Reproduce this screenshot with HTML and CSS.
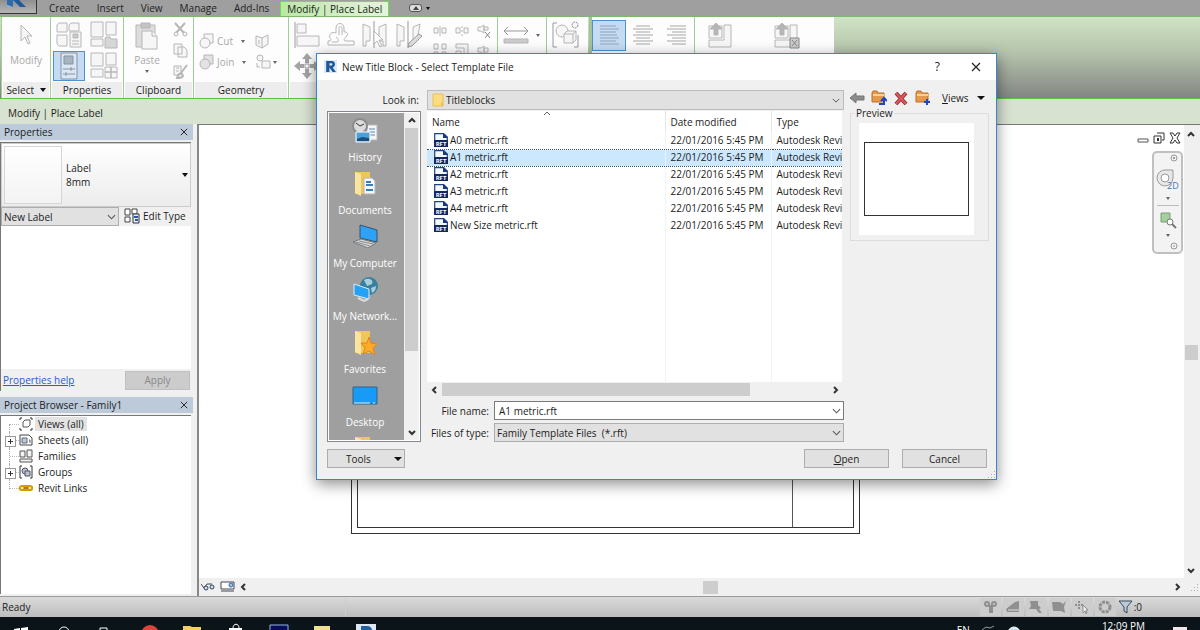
FILE: index.html
```html
<!DOCTYPE html>
<html lang="en">
<head>
    <meta charset="UTF-8">
    <meta name="viewport" content="width=device-width, initial-scale=1">
    <title>New Title Block - Select Template File</title>
    <link rel="stylesheet" href="styles.css">
</head>
<body>

<!-- shared icons -->
<svg class="sprite" aria-hidden="true">
    <symbol id="i-chev" viewBox="0 0 10 6"><path d="M1 1l4 4 4-4" fill="none" stroke="#555" stroke-width="1.2"/></symbol>
    <symbol id="i-x" viewBox="0 0 10 10"><path d="M1 1l8 8M9 1l-8 8" fill="none" stroke="#222" stroke-width="1.2"/></symbol>
    <symbol id="i-rft" viewBox="0 0 14 14">
        <path d="M.7 13V.7h9L13.3 4v9z" fill="#f4f8ff" stroke="#23437f" stroke-width="1.2"/>
        <path d="M9 0l5 5H9z" fill="#17397c"/>
        <rect y="7" width="14" height="7" fill="#12295f"/>
        <text x="7" y="13" font-size="6" font-weight="bold" text-anchor="middle" fill="#fff">RFT</text>
    </symbol>
    <symbol id="i-r" viewBox="0 0 12 12">
        <rect width="12" height="12" fill="#dce8f5"/>
        <path d="M2 1h5c4 0 4 5 1 6l3 4H8L5 7v4H2z" fill="#1d5a9c"/>
        <path d="M5 3h2c1 0 1 2 0 2H5z" fill="#dce8f5"/>
    </symbol>
    <symbol id="i-folder" viewBox="0 0 26 26">
        <path d="M4 2h15v22H4z" fill="#efc65a"/><path d="M4 2l6 2v22l-6-3z" fill="#fbe3a0"/>
    </symbol>
    <symbol id="i-orange" viewBox="0 0 16 16">
        <path d="M1 3l1-2h4l1 2h6v9H1z" fill="#e39a4c" stroke="#b9712a"/><path d="M2 5h11" stroke="#f9d09c" stroke-width="2"/>
    </symbol>
    <symbol id="i-blocks" viewBox="0 0 28 28">
        <path d="M1 1h9v15H1zM13 1h10v10H13zM1 19h12v6H1z"/>
    </symbol>
</svg>

<div class="app">

    <div class="tabs">
        <button class="logo" aria-label="Application menu">
            <svg width="36" height="13" viewBox="0 0 36 13"><path d="M7 0h6v7l-6-2z" fill="#2b6cb0"/><path d="M13 0h6l7 7h-6z" fill="#1e5b98"/><path d="M7 5l6 2-6-1z" fill="#9cc6ea"/></svg>
        </button>
        <a href="#">Create</a>
        <a href="#">Insert</a>
        <a href="#">View</a>
        <a href="#">Manage</a>
        <a href="#">Add-Ins</a>
        <a href="#" class="active">Modify | Place Label</a>
        <button class="pill" aria-label="Minimize ribbon"><svg width="6" height="4" viewBox="0 0 6 4"><path d="M0 4l3-4 3 4z" fill="#444"/></svg></button>
        <i class="tri"></i>
    </div>

    <div class="ribbon">
        <section class="group g-select">
            <div class="body">
                <button class="big">
                    <svg width="14" height="22" viewBox="0 0 14 22"><path d="M2 1v16l4-4 3 7 2-1-3-7h5z" class="dim"/></svg>
                    <span>Modify</span>
                </button>
            </div>
            <h3>Select <i class="tri"></i></h3>
        </section>

        <section class="group g-props">
            <div class="body">
                <button aria-label="Family category"><svg width="28" height="28" viewBox="0 0 28 28" class="dim"><path d="M4 2h8v9H2V4zM16 2h8v8H14V4zM2 14h10v11H4l-2-2z"/><path d="M15 11h11v15H15z"/><path d="M18 13h5v4h-5z" fill="#c9c9c9"/><path d="M17 20h7M17 23h7"/></svg></button>
                <button aria-label="Type properties"><svg width="28" height="28" viewBox="0 0 28 28" class="dim"><path d="M1 1h12v15H1zM16 1h10v13H16zM1 18h12v7H1z"/><path d="M15 18l1-2h4l1 2h6v9H15z" fill="#d6d6d6"/></svg></button>
                <button class="on" aria-label="Properties"><svg width="28" height="28" viewBox="0 0 28 28" class="dim strong"><path d="M6 1h16v26H6z"/><path d="M9 4h9v8H9z" fill="#a9b4bf"/><path d="M8 17h12M8 22h12M16 15v4M11 20v4"/></svg></button>
                <button aria-label="Family types"><svg width="28" height="28" viewBox="0 0 28 28" class="dim"><path d="M1 1h12v13H1zM16 1h10v12H16zM1 17h12v8H1z"/><path d="M15 15h6v5h-6zM21 15h6v5h-6zM15 20h6v6h-6zM21 20h6v6h-6z"/></svg></button>
            </div>
            <h3>Properties</h3>
        </section>

        <section class="group g-clip">
            <div class="body">
                <button class="big">
                    <svg width="24" height="28" viewBox="0 0 24 28" class="dim"><path d="M1 3h19v22H1z" fill="#ddd"/><path d="M6 1h9v5H6z" fill="#c4c4c4"/><path d="M7 9h10l5 5v13H7z"/><path d="M17 9v5h5"/></svg>
                    <span>Paste</span>
                    <i class="tri mini"></i>
                </button>
                <div class="stack">
                    <button aria-label="Cut"><svg width="15" height="15" viewBox="0 0 15 15" class="dim"><path d="M2 1l9 10M12 1L3 11" stroke-width="2"/><circle cx="3" cy="12" r="2"/><circle cx="12" cy="12" r="2"/></svg></button>
                    <button aria-label="Copy"><svg width="15" height="15" viewBox="0 0 15 15" class="dim"><path d="M1 1h8v10H1zM5 4h6l3 3v7H5z"/></svg></button>
                    <button aria-label="Match type"><svg width="15" height="15" viewBox="0 0 15 15" class="dim"><path d="M1 2h7v9H1zM3 4h3M3 7h3"/><path d="M14 1L8 9M4 14c1-4 3-5 5-4l1 2c-1 2-3 2-6 2z" stroke-width="2"/></svg></button>
                </div>
            </div>
            <h3>Clipboard</h3>
        </section>

        <section class="group g-geo">
            <div class="body">
                <div class="row">
                    <svg width="16" height="16" viewBox="0 0 16 16" class="dim"><path d="M5 1h9v9H5z"/><circle cx="6" cy="10" r="5"/></svg>
                    <button>Cut</button><i class="tri mini"></i>
                    <svg width="16" height="16" viewBox="0 0 16 16" class="dim"><path d="M2 3l6 2 6-3v9l-6 4-6-3zM8 5v10M5 7v4"/></svg>
                </div>
                <div class="row">
                    <svg width="16" height="16" viewBox="0 0 16 16" class="dim"><path d="M5 1h9v9H5z" fill="#e2e2e2"/><circle cx="6" cy="10" r="5" fill="#e2e2e2"/></svg>
                    <button>Join</button><i class="tri mini"></i>
                    <svg width="16" height="16" viewBox="0 0 16 16" class="dim"><circle cx="5" cy="4" r="3"/><path d="M7 7h8v7H7zM2 9v4h3"/></svg><i class="tri mini"></i>
                </div>
            </div>
            <h3>Geometry</h3>
        </section>

        <section class="group g-modify">
            <div class="body">
                <div class="large">
                    <svg width="28" height="28" viewBox="0 0 28 28" class="dim"><path d="M2 1v26" stroke="#999"/><path d="M4 3h9v9H4zM4 15h22v10H4z"/></svg>
                    <svg width="28" height="28" viewBox="0 0 28 28" class="dim"><path d="M1 24h26v-4h-8c-3 0-2-3 0-4 3-2 1-6-2-5V7c0-6-8-6-8 0v5c-4-2-8 2-6 5 2 2 1 3-2 3zM5 21h5c2 0 2-3-1-5M12 14V7c0-2 3-2 3 0v7" fill="none"/></svg>
                    <svg width="28" height="28" viewBox="0 0 28 28" class="dim"><path d="M13 0v27" stroke="#999"/><path d="M2 3l7 3v14h-4v5H2zM25 3l-7 3v14h4v5h3z"/><path d="M13 10v13l3-3 3 6 2-1-3-6h4z" fill="#fff"/></svg>
                    <svg width="28" height="28" viewBox="0 0 28 28" class="dim"><path d="M13 0v27" stroke="#999"/><path d="M2 3l7 3v14h-4v5H2zM25 3l-7 3v14h4z"/><path d="M13 26l1-4 10-9 3 2-10 10z" fill="#ddd" stroke="#999"/></svg>
                    <svg width="28" height="28" viewBox="0 0 28 28"><path d="M14 1l5 6h-3v4h-4V7H9zM14 27l5-6h-3v-4h-4v4H9zM1 14l6-5v3h4v4H7v3zM27 14l-6-5v3h-4v4h4v3z" fill="#a4a4a4"/><path d="M12 12h4v4h-4z" fill="#fff" stroke="#999"/></svg>
                </div>
                <div class="minis">
                    <svg width="14" height="16" viewBox="0 0 14 16" class="dim"><path d="M1 5h4v5H1zM9 5h4v5H9zM7 3v10"/></svg>
                    <svg width="14" height="16" viewBox="0 0 14 16" class="dim"><path d="M1 5h4v5H1zM9 5h4v5H9z"/><path d="M7 3v10" stroke-dasharray="2 2"/></svg>
                    <svg width="14" height="16" viewBox="0 0 14 16" class="dim"><path d="M1 4h3l3-2v8L4 8H1zM7 4h4v3H7z"/><path d="M8 9l5 6M13 9l-5 6" stroke="#888"/></svg>
                    <svg width="14" height="16" viewBox="0 0 14 16" class="dim"><path d="M1 3h4v5H1zM9 3h4v5H9zM1 11h4v4H1zM9 11h4v4H9z"/></svg>
                    <svg width="14" height="16" viewBox="0 0 14 16" class="dim"><path d="M1 3h12v12h-4V7H1zM1 10h5v5H1z"/></svg>
                    <svg width="14" height="16" viewBox="0 0 14 16" class="dim"><path d="M1 7h3l3-2v8l-3-2H1zM7 7h4v4H7z"/></svg>
                </div>
            </div>
            <h3></h3>
        </section>

        <section class="group g-measure">
            <div class="body">
                <svg width="28" height="28" viewBox="0 0 28 28" class="dim"><path d="M2 10h24M6 6l-4 4 4 4M22 6l4 4-4 4" fill="none" stroke="#999"/><path d="M2 18h24v4H2z" fill="#ccc"/></svg>
                <i class="tri mini"></i>
            </div>
            <h3></h3>
        </section>

        <section class="group g-create">
            <div class="body">
                <svg width="28" height="28" viewBox="0 0 28 28" class="dim"><path d="M5 2H1v24h4M22 26h4V14" fill="none" stroke="#999"/><circle cx="10" cy="10" r="6"/><path d="M12 13l3-3h9v9l-3 3h-9zM12 13h9v9M21 13l3-3"/><circle cx="23" cy="4" r="3" stroke-dasharray="2 1" stroke="#888"/></svg>
            </div>
            <h3></h3>
        </section>

        <section class="group g-format">
            <div class="body">
                <button class="on" aria-label="Align left"><svg width="24" height="24" viewBox="0 0 24 24"><path d="M3 2h16M3 5h19M3 8h16M3 11h17M3 14h19M3 17h16M3 20h19" stroke="#8ea3b6"/></svg></button>
                <button aria-label="Align center"><svg width="24" height="24" viewBox="0 0 24 24"><path d="M5 2h14M2 5h20M5 8h14M2 11h20M5 14h14M2 17h20M5 20h14" stroke="#a5a5a5"/></svg></button>
                <button aria-label="Align right"><svg width="24" height="24" viewBox="0 0 24 24"><path d="M5 2h16M2 5h19M7 8h14M2 11h19M7 14h14M2 17h19M7 20h14" stroke="#a5a5a5"/></svg></button>
            </div>
            <h3></h3>
        </section>

        <section class="group g-load">
            <div class="body">
                <svg width="28" height="28" viewBox="0 0 28 28" class="dim"><path d="M3 5h13v12H3zM18 4h7v22H3v-7h15z"/><path d="M10 2l6 6h-4v6H8V8H4z" fill="#b5b5b5"/></svg>
                <svg width="28" height="28" viewBox="0 0 28 28" class="dim"><path d="M3 5h13v12H3zM18 4h7v22H3v-7h15z"/><path d="M10 2l6 6h-4v6H8V8H4z" fill="#b5b5b5"/><path d="M18 17h9v10h-9z" fill="#ccc" stroke="#888"/><path d="M20 19l5 6M25 19l-5 6" stroke="#888"/></svg>
            </div>
            <h3></h3>
        </section>
    </div>

    <div class="options">Modify | Place Label</div>

    <div class="work">
        <aside class="side">
            <div class="cap"><span>Properties</span><button aria-label="Close properties"><svg width="8" height="8"><use href="#i-x"/></svg></button></div>
            <div class="props">
                <button class="type">
                    <span class="thumb"></span>
                    <span class="name">Label<br>8mm</span>
                    <i class="tri"></i>
                </button>
                <div class="filter">
                    <span class="combo"><select aria-label="Filter"><option>New Label</option></select><svg width="9" height="6"><use href="#i-chev"/></svg></span>
                    <button class="edit"><svg width="16" height="16" viewBox="0 0 16 16"><path d="M1 1h5v6H1zM8 1h5v5H8zM1 9h5v5H1z" fill="#fff" stroke="#444"/><path d="M9 6h6v9H9z" fill="#e8eefc" stroke="#333"/><path d="M10 9h4M11 12h3" stroke="#2b55b5" stroke-width="2"/></svg>Edit Type</button>
                </div>
                <div class="blank"></div>
                <div class="apply"><a href="#">Properties help</a><button disabled>Apply</button></div>
            </div>

            <div class="cap"><span>Project Browser - Family1</span><button aria-label="Close browser"><svg width="8" height="8"><use href="#i-x"/></svg></button></div>
            <ul class="tree">
                <li><i class="br first"></i><svg width="14" height="14" viewBox="0 0 14 14"><path d="M3 1H1v2M11 1h2v2M1 11v2h2M13 11v2h-2" fill="none" stroke="#333"/><path d="M4 5l2-2h5v5l-2 2H4z" fill="#fff" stroke="#555"/></svg><span class="sel">Views (all)</span></li>
                <li><i class="br plus"></i><svg width="14" height="14" viewBox="0 0 14 14"><path d="M1 2h9l3 3v7H1z" fill="#fff" stroke="#444"/><path d="M3 5h5v5H3zM10 7h1v3" fill="#b9cbe0" stroke="#667"/></svg><span>Sheets (all)</span></li>
                <li><i class="br"></i><svg width="14" height="14" viewBox="0 0 14 14"><path d="M1 2h5v6H1zM8 1h5v7H8zM1 10h12v3H1z" fill="#f3f3f3" stroke="#555"/></svg><span>Families</span></li>
                <li><i class="br plus"></i><svg width="14" height="14" viewBox="0 0 14 14"><path d="M3 1H1v12h2M11 1h2v12h-2" fill="none" stroke="#333"/><circle cx="6" cy="6" r="3" fill="#b9c4d0" stroke="#556"/><path d="M6 6h5v5H6z" fill="#b9c4d0" stroke="#556"/></svg><span>Groups</span></li>
                <li><i class="br last"></i><svg width="14" height="14" viewBox="0 0 14 14"><path d="M3 5h3v4H3c-3 0-3-4 0-4zM11 5H8v4h3c3 0 3-4 0-4z" fill="#fff3b0" stroke="#d99a00" stroke-width="2"/><path d="M4 7h6" stroke="#8a6200"/></svg><span>Revit Links</span></li>
            </ul>
        </aside>

        <main class="view">
            <div class="canvas">
                <div class="sheet"><div class="inner"><div class="strip"></div></div></div>
                <div class="mdi">
                    <svg width="12" height="12" viewBox="0 0 12 12"><path d="M1 7h10v3H1z" fill="#fff" stroke="#555"/></svg>
                    <svg width="12" height="12" viewBox="0 0 12 12"><path d="M4 1h7v7H9M1 4h7v7H1z" fill="none" stroke="#333"/><path d="M4 6h2v3H4z" fill="#333"/></svg>
                    <svg width="12" height="12" viewBox="0 0 12 12"><path d="M1 1h3l2 3 2-3h3L8 6l3 5H8L6 8l-2 3H1l3-5z" fill="#fff" stroke="#333"/></svg>
                </div>
                <div class="navbar">
                    <svg width="9" height="9" viewBox="0 0 9 9"><circle cx="4" cy="4" r="3" fill="none" stroke="#999"/><path d="M3 3l2 2M5 3L3 5" stroke="#999"/></svg>
                    <svg width="24" height="24" viewBox="0 0 24 24"><path d="M10 2h7v8a8 8 0 1 1-7-8z" fill="#e6e8ea" stroke="#999"/><circle cx="9" cy="10" r="4" fill="#fff" stroke="#999"/><text x="11" y="21" font-size="9" fill="#3f76b5">2D</text></svg>
                    <i class="tri mini"></i>
                    <hr>
                    <svg width="18" height="18" viewBox="0 0 18 18"><path d="M2 2h9v9H2z" fill="#a5cf9a" stroke="#7d9b78"/><circle cx="11" cy="11" r="3" fill="#fff" stroke="#777"/><path d="M13 13l4 4" stroke="#777" stroke-width="2"/></svg>
                    <i class="tri mini"></i>
                    <svg width="9" height="9" viewBox="0 0 9 9"><circle cx="4" cy="4" r="3" fill="none" stroke="#999"/><path d="M3 4h2" stroke="#999"/></svg>
                </div>
            </div>
            <div class="vbar">
                <svg width="8" height="6" viewBox="0 0 8 6"><path d="M1 5l3-3 3 3" class="arr"/></svg>
                <div class="thumb"></div>
                <svg width="8" height="6" viewBox="0 0 8 6"><path d="M1 1l3 3 3-3" class="arr"/></svg>
            </div>
            <div class="hbar">
                <svg width="14" height="12" viewBox="0 0 14 12"><path d="M0 3l3 4 3-4h5" fill="none" stroke="#444"/><circle cx="5" cy="7" r="2" fill="#cfe0f2" stroke="#345"/><circle cx="11" cy="6" r="2" fill="#cfe0f2" stroke="#345"/></svg>
                <svg width="15" height="12" viewBox="0 0 15 12"><path d="M1 1h13v7H1zM1 10h13" fill="#fff" stroke="#445"/><circle cx="11" cy="4" r="2" fill="#9cc3ea" stroke="#369"/></svg>
                <svg width="6" height="8" viewBox="0 0 6 8"><path d="M5 1L2 4l3 3" class="arr"/></svg>
                <div class="thumb"></div>
                <svg width="6" height="8" viewBox="0 0 6 8"><path d="M1 1l3 3-3 3" class="arr"/></svg>
                <i class="grip"></i>
            </div>
        </main>
    </div>

    <footer class="status">
        <span class="ready">Ready</span>
        <div class="cell"></div>
        <div class="toggles">
            <button aria-label="Select links"><svg width="16" height="14" viewBox="0 0 16 14"><path d="M7 5h4v8H7z" fill="#8f8f8f"/><circle cx="5" cy="4" r="2" fill="none" stroke="#8f8f8f" stroke-width="2"/><circle cx="12" cy="4" r="2" fill="none" stroke="#8f8f8f" stroke-width="2"/></svg></button>
            <button aria-label="Select underlay"><svg width="16" height="14" viewBox="0 0 16 14"><path d="M1 9l9-7 4-1v11H2z" fill="#8f8f8f"/><path d="M3 10h11" stroke="#ddd"/></svg></button>
            <button aria-label="Select pinned"><svg width="16" height="14" viewBox="0 0 16 14"><path d="M2 1h8v4l3 3-2 1 3 4h-3L8 9H1l2-3z" fill="#8f8f8f"/></svg></button>
            <button aria-label="Select by face"><svg width="16" height="14" viewBox="0 0 16 14"><path d="M1 2h8l3 2 3-3-2 6 1 6-4-2H2z" fill="#8f8f8f"/></svg></button>
            <button aria-label="Drag elements"><svg width="16" height="14" viewBox="0 0 16 14"><path d="M5 1v8M1 5h8" stroke="#8f8f8f" stroke-dasharray="2 1" stroke-width="2"/><path d="M9 5v8l2-2 1 3 1-1-1-3h2z" fill="#eee" stroke="#8f8f8f"/></svg></button>
            <button aria-label="Background processes"><svg width="16" height="14" viewBox="0 0 16 14"><circle cx="8" cy="7" r="5" fill="none" stroke="#8f8f8f" stroke-width="3" stroke-dasharray="3 1"/></svg></button>
            <span class="filt"><svg width="15" height="14" viewBox="0 0 15 14"><path d="M1 1h13L9 7v6l-3-2V7z" fill="#b9cbdb" stroke="#3b4a58"/></svg>:0</span>
        </div>
    </footer>

    <div class="taskbar">
        <svg width="16" height="13" viewBox="0 0 16 13"><path d="M1 12l6-1v2H1zM8 11l7-1v3H8z" fill="#fff"/></svg>
        <svg width="16" height="13" viewBox="0 0 16 13"><circle cx="12" cy="15" r="5" fill="none" stroke="#fff"/></svg>
        <svg width="16" height="13" viewBox="0 0 16 13"><path d="M9 13v-2h7v2" fill="none" stroke="#fff"/></svg>
        <svg width="20" height="13" viewBox="0 0 20 13"><circle cx="20" cy="17" r="9" fill="#d9453a"/></svg>
        <svg width="20" height="13" viewBox="0 0 20 13"><path d="M10 13V9h7l2 1h9v3z" fill="#f2cf63"/></svg>
        <svg width="20" height="13" viewBox="0 0 20 13"><path d="M13 13v-2h13v2z" fill="#fff"/><path d="M17 11c0-5 6-5 6 0" fill="none" stroke="#fff"/></svg>
        <svg width="20" height="13" viewBox="0 0 20 13"><path d="M11 13V8h18v5" fill="#0b0b5c" stroke="#8fb7e6"/></svg>
        <svg width="20" height="13" viewBox="0 0 20 13"><path d="M12 9h16v4H12z" fill="#efdf90"/></svg>
        <span class="current"><svg width="20" height="13" viewBox="0 0 20 13"><path d="M0 7h20v6H0z" fill="#dbe8f4"/><path d="M5 13V9h6c3 0 5 2 5 4z" fill="#23609f"/></svg></span>
        <div class="tray">
            <span class="lang">EN</span>
            <svg width="16" height="13" viewBox="0 0 16 13"><path d="M2 13l4-3 4 1 4-2" fill="none" stroke="#999"/></svg>
            <svg width="16" height="13" viewBox="0 0 16 13"><circle cx="8" cy="16" r="6" fill="#cfe6f5" stroke="#fff"/></svg>
            <time>12:09 PM</time>
            <svg width="16" height="13" viewBox="0 0 16 13"><path d="M1 10h14v3H1z" fill="#f3e6ea"/></svg>
        </div>
    </div>
</div>

<div class="dialog" role="dialog" aria-labelledby="dlg-title">
    <header>
        <svg width="13" height="13"><use href="#i-r"/></svg>
        <h2 id="dlg-title">New Title Block - Select Template File</h2>
        <button class="help" aria-label="Help">?</button>
        <button aria-label="Close"><svg width="10" height="10"><use href="#i-x"/></svg></button>
    </header>

    <div class="content">
        <label class="lookin" for="lookin">Look in:</label>
        <span class="combo wide">
            <svg class="fold" width="12" height="14" viewBox="0 0 12 14"><path d="M1 1h10v12H1z" fill="#fbdc80" stroke="#eac04f"/><path d="M9 9h2v4H9z" fill="#f3c24b"/></svg>
            <select id="lookin"><option>Titleblocks</option></select>
            <svg class="chev" width="8" height="5"><use href="#i-chev"/></svg>
        </span>
        <div class="tools">
            <button aria-label="Back"><svg width="16" height="16" viewBox="0 0 16 16"><path d="M1 8l6-5v3h8v4H7v3z" fill="#8c8c8c" stroke="#777"/></svg></button>
            <button aria-label="Up one level"><svg width="16" height="16" viewBox="0 0 16 16"><use href="#i-orange"/><path d="M8 14h5V9M10 11l3-3 3 3" fill="none" stroke="#2344c4" stroke-width="2"/></svg></button>
            <button aria-label="Delete"><svg width="16" height="16" viewBox="0 0 16 16"><path d="M3 3l10 11M13 3L3 14" stroke="#9c2a30" stroke-width="4"/><path d="M3 3l10 11M13 3L3 14" stroke="#d65a5e" stroke-width="2"/></svg></button>
            <button aria-label="New folder"><svg width="16" height="16" viewBox="0 0 16 16"><use href="#i-orange"/><path d="M12 9v6M9 12h6" stroke="#2344c4" stroke-width="2"/></svg></button>
            <button class="views"><u>V</u>iews <i class="tri"></i></button>
        </div>

        <div class="places">
            <ul>
                <li><svg width="28" height="28" viewBox="0 0 28 28"><path d="M16 8h10v15H16z" fill="#f5f5f5" stroke="#bbb"/><path d="M18 12h6M18 15h6M18 18h6" stroke="#5a86b5"/><circle cx="9" cy="9" r="7" fill="#dcdcdc" stroke="#8b8b8b" stroke-width="2"/><path d="M9 9L5 6M9 9l4-2" stroke="#333"/><path d="M5 15h14v10H5z" fill="#4aa0dc" stroke="#fff"/><path d="M6 22l5-2 7 1v3H6z" fill="#1d4f7c"/></svg>History</li>
                <li><svg width="28" height="28" viewBox="0 0 28 28"><use href="#i-folder" width="26" height="26"/><path d="M13 8h8l3 3v13H13z" fill="#f7f7f7" stroke="#b5b5b5"/><path d="M15 12h5M15 15h7M15 20h7" stroke="#347fc0" stroke-width="2"/></svg>Documents</li>
                <li><svg width="28" height="28" viewBox="0 0 28 28"><path d="M9 2l17 5v12L9 15z" fill="#2da2f7" stroke="#35536d"/><path d="M2 19l8-3 15 4-8 5z" fill="#d8dbdd" stroke="#777"/><path d="M5 19l14 4M8 18l14 3" stroke="#888"/></svg>My Computer</li>
                <li><svg width="28" height="28" viewBox="0 0 28 28"><circle cx="18" cy="10" r="9" fill="#397f9f"/><path d="M13 4c5-3 10 0 8 4l-5 2zM20 12l5-2c0 4-2 6-4 7z" fill="#a5d0dc"/><path d="M3 8l15 5v10L3 19z" fill="#26a2f5" stroke="#d8edf8"/><path d="M7 22l6 3 4-2" fill="none" stroke="#ddd" stroke-width="2"/></svg>My Network...</li>
                <li><svg width="28" height="28" viewBox="0 0 28 28"><use href="#i-folder" width="26" height="26"/><path d="M18 8l2 6 6 1-4 4 2 7-6-4-6 3 2-6-4-5h6z" fill="#fbab27" stroke="#e5831a"/></svg>Favorites</li>
                <li><svg width="28" height="28" viewBox="0 0 28 28"><path d="M2 5h24v17H2z" fill="#189bf7" stroke="#35627f"/><path d="M3 21h22" stroke="#d9f0ff" stroke-dasharray="16 3 2 1"/></svg>Desktop</li>
                <li><svg width="28" height="28"><use href="#i-folder" width="26" height="26"/></svg></li>
            </ul>
            <div class="pbar">
                <svg width="8" height="6" viewBox="0 0 8 6"><path d="M1 5l3-3 3 3" class="arr"/></svg>
                <div class="thumb"></div>
                <svg width="8" height="6" viewBox="0 0 8 6"><path d="M1 1l3 3 3-3" class="arr"/></svg>
            </div>
        </div>

        <div class="center">
            <div class="list">
                <svg class="sort" width="8" height="5" viewBox="0 0 8 5"><path d="M1 4l3-3 3 3" fill="none" stroke="#666"/></svg>
                <table>
                    <thead><tr><th class="c-name">Name</th><th class="c-date">Date modified</th><th>Type</th></tr></thead>
                    <tbody>
                        <tr><td><svg width="14" height="14"><use href="#i-rft"/></svg>A0 metric.rft</td><td>22/01/2016 5:45 PM</td><td>Autodesk Revit</td></tr>
                        <tr class="picked"><td><svg width="14" height="14"><use href="#i-rft"/></svg>A1 metric.rft</td><td>22/01/2016 5:45 PM</td><td>Autodesk Revit</td></tr>
                        <tr><td><svg width="14" height="14"><use href="#i-rft"/></svg>A2 metric.rft</td><td>22/01/2016 5:45 PM</td><td>Autodesk Revit</td></tr>
                        <tr><td><svg width="14" height="14"><use href="#i-rft"/></svg>A3 metric.rft</td><td>22/01/2016 5:45 PM</td><td>Autodesk Revit</td></tr>
                        <tr><td><svg width="14" height="14"><use href="#i-rft"/></svg>A4 metric.rft</td><td>22/01/2016 5:45 PM</td><td>Autodesk Revit</td></tr>
                        <tr><td><svg width="14" height="14"><use href="#i-rft"/></svg>New Size metric.rft</td><td>22/01/2016 5:45 PM</td><td>Autodesk Revit</td></tr>
                        <tr class="rest"><td></td><td></td><td></td></tr>
                    </tbody>
                </table>
            </div>
            <div class="lbar">
                <svg width="6" height="8" viewBox="0 0 6 8"><path d="M5 1L2 4l3 3" class="arr"/></svg>
                <div class="thumb"></div>
                <svg width="6" height="8" viewBox="0 0 6 8"><path d="M1 1l3 3-3 3" class="arr"/></svg>
            </div>
            <div class="field">
                <label for="fname">File name:</label>
                <span class="combo"><input id="fname" type="text" value="A1 metric.rft"><svg width="9" height="6"><use href="#i-chev"/></svg></span>
            </div>
            <div class="field">
                <label for="ftype">Files of type:</label>
                <span class="combo"><select id="ftype"><option>Family Template Files &nbsp;(*.rft)</option></select><svg width="9" height="6"><use href="#i-chev"/></svg></span>
            </div>
        </div>

        <fieldset class="preview">
            <legend>Preview</legend>
            <div class="paper"><div class="frame"></div></div>
        </fieldset>
    </div>

    <div class="actions">
        <button class="toolsbtn"><span>Tools</span><i class="tri"></i></button>
        <button class="ok"><u>O</u>pen</button>
        <button class="ok">Cancel</button>
    </div>
    <i class="grip"></i>
</div>

</body>
</html>
```
FILE: styles.css
```css
* {
    box-sizing: border-box;
}
body {
    margin: 0;
    font-family: "Open Sans", "Noto Sans", sans-serif;
    font-size: 10px;
    line-height: 14px;
    color: #1c1c1c;
    overflow: hidden;
}
h2, h3, ul, fieldset {
    margin: 0;
    padding: 0;
    font-size: 10px;
    font-weight: normal;
    list-style: none;
}
button, select, input {
    font: inherit;
    color: inherit;
    margin: 0;
    padding: 0;
    border: 0;
    background: none;
    border-radius: 0;
}
select {
    appearance: none;
}
svg {
    display: block;
    flex: none;
}
.sprite {
    position: absolute;
    width: 0;
    height: 0;
}
.tri {
    flex: none;
    display: inline-block;
    border: 4px solid transparent;
    border-top-color: #111;
    border-bottom: 0;
}
.tri.mini {
    border-width: 3px 2px 0;
    border-top-color: #666;
}
.dim {
    stroke: #b6b6b6;
    fill: #f6f6f6;
}
.strong {
    stroke: #8195a8;
    fill: #dbe6f2;
}
.arr {
    fill: none;
    stroke: #333;
    stroke-width: 2;
}
.thumb {
    background: #cdcdcd;
}
.grip {
    width: 8px;
    height: 8px;
    background: radial-gradient(#aaa 1px, transparent 1px) 0 0 / 3px 3px;
    clip-path: polygon(100% 0, 100% 100%, 0 100%);
}

/* whole window */
.app {
    display: flex;
    flex-direction: column;
    height: 100vh;
    background: #f0f0f0;
}

/* ribbon tabs */
.tabs {
    display: flex;
    align-items: center;
    gap: 1px;
    height: 17px;
    background: #9f9f9f;
    border-bottom: 1px solid #7cb870;
}
.tabs a {
    color: #222;
    text-decoration: none;
    padding: 0 8px;
}
.tabs .active {
    align-self: flex-end;
    height: 15px;
    margin-left: 2px;
    padding: 0 6px;
    background: linear-gradient(90deg, #b9e8a5, #e3f5da);
    border: 1px solid #6be04c;
    border-bottom: 0;
}
.logo {
    width: 37px;
    height: 14px;
    margin-right: 3px;
    align-self: flex-start;
    border: 1px solid #333;
    border-width: 0 1px 1px 0;
    background: linear-gradient(#8f8f8f, #b5b5b5);
}
.pill {
    display: flex;
    align-items: center;
    justify-content: center;
    width: 13px;
    height: 8px;
    margin: 0 3px 0 19px;
    border: 1px solid #555;
    border-radius: 3px;
    background: #ddd;
}
.tabs .tri {
    border-width: 3px 2px 0;
}

/* ribbon */
.ribbon {
    display: flex;
    height: 82px;
    padding-left: 1px;
    background: linear-gradient(#cfe4c4, #b4c2ab 45%, #838583);
    border-bottom: 1px solid #5cc040;
}
.group {
    display: flex;
    flex-direction: column;
    flex: none;
    background: #fdfdfd;
    border-left: 1px solid #9fcf92;
}
.group .body {
    flex: 1;
    display: flex;
    color: #a8a8a8;
}
.group h3 {
    height: 16px;
    margin: 0 1px;
    background: #ededed;
    text-align: center;
    line-height: 16px;
}
.group button {
    display: flex;
    align-items: center;
    justify-content: center;
}
.group .big {
    flex-direction: column;
    justify-content: flex-start;
    gap: 3px;
    padding-top: 5px;
}
.g-select {
    width: 49px;
}
.group.g-select .big {
    width: 48px;
    gap: 7px;
    padding-top: 7px;
}
.g-select .tri {
    border-width: 4px 3px 0;
    margin: 0 0 2px 3px;
}
.g-props {
    width: 73px;
}
.g-props .body {
    flex-wrap: wrap;
    padding: 3px 2px 1px;
    column-gap: 3px;
}
.g-props button {
    width: 32px;
    height: 30px;
}
.group .on {
    background: #c5dbf3;
    border: 1px solid #4f90cf;
}
.g-clip {
    width: 70px;
}
.g-clip .big {
    width: 46px;
}
.stack {
    display: flex;
    flex-direction: column;
    gap: 6px;
    padding: 5px 0 0 3px;
}
.g-geo {
    width: 95px;
}
.g-geo .body {
    flex-direction: column;
    gap: 5px;
    padding: 16px 0 0 5px;
}
.row {
    display: flex;
    align-items: center;
    gap: 2px;
}
.row .tri {
    margin: 0 7px 0 6px;
}
.row .tri:last-child {
    margin: 0;
}
.g-modify {
    width: 209px;
}
.large {
    display: flex;
    flex-wrap: wrap;
    gap: 3px 6px;
    align-content: flex-start;
    width: 144px;
    padding: 4px 0 0 4px;
}
.minis {
    display: grid;
    grid-template-columns: repeat(3, 14px);
    gap: 2px 8px;
    align-content: start;
    padding-top: 6px;
}
.g-measure {
    width: 49px;
}
.g-measure .body {
    align-items: flex-start;
    padding: 4px 0 0 4px;
    gap: 6px;
}
.g-measure .tri {
    margin-top: 13px;
}
.g-create {
    width: 42px;
}
.g-create .body {
    padding: 4px 5px;
}
.g-format {
    width: 105px;
    margin-left: 1px;
    border-left: 3px solid #a6c29b;
}
.g-format button {
    width: 34px;
    height: 31px;
    margin-top: 3px;
}
.g-load {
    width: 140px;
}
.g-load .body {
    padding: 4px 0 0 11px;
    gap: 38px;
}

.options {
    height: 25px;
    padding: 7px 8px 0;
    background: #d8e2d0;
}

/* panels at the left */
.work {
    flex: 1;
    display: flex;
    min-height: 0;
}
.side {
    width: 193px;
    display: flex;
    flex-direction: column;
    margin-right: 4px;
}
.cap {
    display: flex;
    justify-content: space-between;
    align-items: center;
    height: 16px;
    padding: 0 5px 0 4px;
    background: #bccada;
}
.props {
    display: flex;
    flex-direction: column;
    height: 249px;
    margin: 2px 2px 6px 0;
    border: 1px solid #777;
    border-width: 1px 0 0 1px;
}
.type {
    display: flex;
    align-items: center;
    height: 64px;
    padding: 2px;
    text-align: left;
    background: linear-gradient(#fff, #ececec);
    border: 1px solid #ccc;
}
.type .thumb {
    width: 58px;
    height: 58px;
    margin-right: 4px;
    border: 1px solid #d6d6d6;
    background: linear-gradient(#fff, #f3f3f3);
}
.type .name {
    flex: 1;
}
.type .tri {
    border-width: 4px 3px 0;
}
.filter {
    display: flex;
    gap: 5px;
}
.edit {
    display: flex;
    gap: 3px;
    align-items: center;
    height: 18px;
}
.combo {
    position: relative;
    display: block;
}
.combo select, .combo input {
    width: 100%;
    height: 19px;
    padding: 0 2px;
    background: #e1e1e1;
    border: 1px solid #adadad;
}
.combo > svg {
    position: absolute;
    right: 3px;
    top: 7px;
}
.filter .combo {
    width: 118px;
}
.blank {
    flex: 1;
    background: #fff;
}
.apply {
    display: flex;
    justify-content: space-between;
    align-items: center;
    height: 22px;
    padding: 0 1px 0 2px;
}
.apply a {
    color: #2660c8;
}
.apply button {
    width: 65px;
    height: 19px;
    background: #cccccc;
    border: 1px solid #bfbfbf;
    color: #888;
}
.tree {
    flex: 1;
    margin: 2px 2px 2px 0;
    background: #fff;
    border: 1px solid #777;
    border-width: 1px 0 0 1px;
}
.tree li {
    display: flex;
    align-items: center;
    height: 16px;
}
.tree span {
    padding: 0 3px;
    margin-left: 2px;
}
.tree .sel {
    background: #e3e3e3;
}
.br {
    position: relative;
    width: 10px;
    height: 16px;
    margin-left: 8px;
    border-left: 1px dotted #aaa;
    background: linear-gradient(90deg, #bbb 50%, transparent 50%) 0 8px / 2px 1px repeat-x;
}
.br.first {
    height: 8px;
    align-self: flex-end;
    background-position: 0 0;
}
.br.last {
    height: 9px;
    align-self: flex-start;
}
.plus::after {
    content: "";
    position: absolute;
    left: -5px;
    top: 4px;
    width: 9px;
    height: 9px;
    border: 1px solid #999;
    background:
        linear-gradient(#333, #333) center / 5px 1px no-repeat,
        linear-gradient(#333, #333) center / 1px 5px no-repeat,
        #fff;
}

/* drawing area */
.view {
    flex: 1;
    display: grid;
    grid-template-columns: 1fr 16px;
    grid-template-rows: 1fr 18px;
    border-top: 1px solid #777;
    border-left: 2px solid #888;
    min-width: 0;
}
.canvas {
    position: relative;
    background: #fff;
    overflow: hidden;
}
.sheet {
    position: absolute;
    left: 152px;
    top: 49px;
    width: 509px;
    height: 360px;
    padding: 5px;
    border: 1px solid #333;
}
.inner {
    display: flex;
    justify-content: flex-end;
    height: 100%;
    border: 1px solid #333;
}
.strip {
    width: 61px;
    border-left: 1px solid #555;
}
.mdi {
    position: absolute;
    right: 3px;
    top: 7px;
    display: flex;
    gap: 4px;
}
.navbar {
    position: absolute;
    right: 1px;
    top: 26px;
    width: 31px;
    height: 103px;
    display: flex;
    flex-direction: column;
    align-items: center;
    justify-content: space-between;
    padding: 1px 2px;
    border: 2px solid #c0c0c0;
    border-radius: 5px;
    background: #f3f3f3;
}
.navbar hr {
    width: 22px;
    margin: 0;
    border: 0;
    border-top: 1px solid #bbb;
}
.navbar > svg:first-child, .navbar > svg:last-child {
    align-self: flex-end;
}
.vbar {
    display: flex;
    flex-direction: column;
    align-items: center;
    justify-content: space-between;
    padding: 6px 2px 4px 0;
}
.vbar .thumb {
    width: 13px;
    height: 15px;
}
.hbar {
    grid-column: 1 / 3;
    display: flex;
    align-items: center;
    padding: 0 2px;
    gap: 5px;
}
.hbar .thumb {
    width: 15px;
    height: 13px;
    margin: 0 auto;
}
.hbar .grip {
    margin-left: 4px;
}

/* status bar and taskbar */
.status {
    display: flex;
    align-items: center;
    height: 21px;
    border-top: 1px solid #999;
    background: linear-gradient(#dadada, #bdbdbd);
}
.ready {
    width: 345px;
    padding-left: 2px;
}
.cell {
    flex: 1;
    height: 18px;
    border-left: 1px solid #ccc;
}
.toggles {
    display: flex;
    align-items: center;
    gap: 2px;
    padding-right: 58px;
}
.toggles button {
    display: flex;
    align-items: center;
    justify-content: center;
    width: 21px;
    height: 18px;
    background: #cdcdcd;
}
.filt {
    display: flex;
    align-items: center;
    gap: 1px;
}
.taskbar {
    display: flex;
    flex: none;
    height: 13px;
    overflow: hidden;
    padding-left: 13px;
    gap: 23px;
    background: #0b1519;
    color: #fff;
}
.taskbar > svg {
    overflow: visible;
}
.current {
    width: 42px;
    padding-left: 11px;
}
.tray {
    display: flex;
    gap: 10px;
    margin-left: auto;
    padding-right: 12px;
}
.lang {
    padding-top: 6px;
}
.tray time {
    padding-top: 2px;
    margin: 0 17px 0 70px;
}

/* file dialog */
.dialog {
    position: absolute;
    left: 316px;
    top: 53px;
    width: 681px;
    background: #f0f0f0;
    border: 1px solid #3b82d0;
    box-shadow: 0 4px 14px rgba(0, 0, 0, .45);
}
.dialog header {
    display: flex;
    align-items: center;
    height: 26px;
    padding: 0 15px 1px 7px;
    gap: 5px;
    background: #fff;
}
.dialog h2 {
    flex: 1;
}
.help {
    font-size: 12px;
    margin-right: 26px;
}
.content {
    display: grid;
    grid-template-columns: 94px 417px 139px;
    grid-template-rows: 20px 331px;
    column-gap: 6px;
    row-gap: 1px;
    padding: 10px 7px 0 10px;
}
.lookin {
    text-align: right;
    padding: 3px 2px 0 0;
}
.wide select {
    height: 20px;
    padding-left: 18px;
    border: 1px solid #bbb;
}
.combo .fold {
    left: 5px;
    top: 3px;
}
.combo .chev {
    right: 4px;
    top: 8px;
}
.tools {
    display: flex;
    align-items: flex-start;
    gap: 6px;
    margin-left: -1px;
}
.tools button {
    display: flex;
    align-items: center;
    height: 16px;
}
.tools .views {
    margin-left: 5px;
}
.views .tri {
    margin-left: 8px;
}
.places {
    display: flex;
    border: 1px solid #828790;
    background: #fff;
    padding: 1px;
}
.places ul {
    flex: 1;
    overflow: hidden;
    height: 327px;
    padding: 4px 3px 0 0;
    background: #9f9f9f;
    color: #fff;
}
.places li {
    display: flex;
    flex-direction: column;
    align-items: center;
    gap: 5px;
    height: 53px;
    white-space: nowrap;
}
.pbar {
    display: flex;
    flex-direction: column;
    align-items: center;
    width: 15px;
    padding: 4px 0;
    background: #f0f0f0;
}
.pbar .thumb {
    width: 13px;
    height: 223px;
    margin: 5px 0 auto;
}
.center {
    min-width: 0;
}
.list {
    position: relative;
    height: 271px;
    margin-right: 2px;
    overflow: hidden;
    background: #fff;
}
.list table {
    width: 100%;
    height: 100%;
    table-layout: fixed;
    border-collapse: collapse;
}
.list th {
    height: 21px;
    padding: 0 5px;
    text-align: left;
    font-weight: normal;
    border-left: 1px solid #e5e5e5;
}
.list td {
    height: 17px;
    padding: 0 0 0 5px;
    border-left: 1px solid #edf4fa;
    white-space: nowrap;
    overflow: hidden;
    line-height: 15px;
}
.list th:first-child, .list td:first-child {
    border-left: 0;
}
.list td svg {
    float: left;
    margin: 0 2px 0 2px;
}
.c-name {
    width: 238px;
}
.c-date {
    width: 106px;
}
.list .picked td {
    background: #cce8ff;
    border-top: 1px dotted #35536d;
    border-bottom: 1px dotted #35536d;
}
.list .rest td {
    height: auto;
}
.sort {
    position: absolute;
    left: 116px;
    top: 0;
}
.lbar {
    display: flex;
    align-items: center;
    height: 15px;
    padding: 0 5px 0 4px;
}
.lbar .thumb {
    width: 308px;
    height: 13px;
    margin: 0 auto 0 5px;
}
.field {
    display: flex;
    align-items: center;
    margin-top: 3px;
}
.lbar + .field {
    margin-top: 4px;
}
.field label {
    width: 67px;
    padding-right: 5px;
    text-align: right;
    white-space: nowrap;
}
.field .combo {
    flex: 1;
}
.field input {
    padding-left: 4px;
    background: #fff;
    border-color: #7a7a7a;
}
.preview {
    height: 135px;
    padding: 3px 14px 5px 8px;
    border: 1px solid #dcdcdc;
    min-width: 0;
    margin-top: -5px;
}
.preview legend {
    padding: 0 1px;
    margin-left: -4px;
}
.paper {
    height: 112px;
    padding: 19px 5px;
    background: #fff;
}
.frame {
    height: 74px;
    border: 1px solid #333;
}
.actions {
    display: flex;
    gap: 13px;
    padding: 7px 9px 11px 10px;
}
.actions button {
    height: 19px;
    background: #e1e1e1;
    border: 1px solid #adadad;
}
.actions .toolsbtn {
    display: flex;
    align-items: center;
    width: 78px;
    margin-right: auto;
    padding: 0 2px 0 18px;
}
.toolsbtn span {
    flex: 1;
    text-align: left;
}
.actions .ok {
    width: 85px;
}
.dialog > .grip {
    position: absolute;
    right: 1px;
    bottom: 1px;
}
```
